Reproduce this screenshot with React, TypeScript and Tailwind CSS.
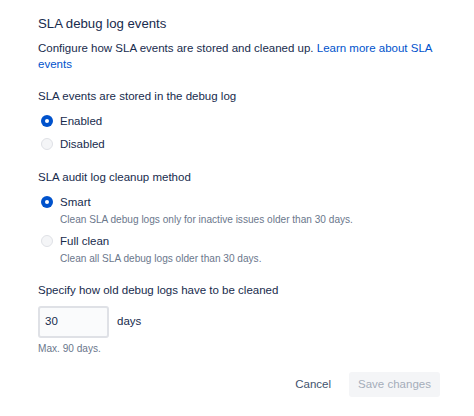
import React from 'react';

const Radio: React.FC<{ checked?: boolean }> = ({ checked }) =>
  checked ? (
    <span className="w-[12px] h-[12px] rounded-full bg-[#0052cc] flex items-center justify-center shrink-0">
      <span className="w-[4px] h-[4px] rounded-full bg-white" />
    </span>
  ) : (
    <span className="w-[12px] h-[12px] rounded-full bg-[#f4f5f7] border border-[#dfe1e6] shrink-0" />
  );

interface OptionProps {
  label:        string;
  description?: string;
  checked?:     boolean;
}

const Option: React.FC<OptionProps> = ({ label, description, checked }) => (
  <div className="flex items-start gap-[7px] pl-[3px]">
    <div className="h-[18px] flex items-center">
      <Radio checked={checked} />
    </div>
    <div>
      <div className="text-[11.5px] leading-[18px] text-[#172b4d]">{label}</div>
      {description && (
        <div className="text-[10.1px] leading-[15px] text-[#6b778c] mt-[1px]">{description}</div>
      )}
    </div>
  </div>
);

export default function App() {
  return (
    <div
      className="w-[474px] h-[416px] bg-white pl-[38px] pr-[34px] pt-[14px]"
      style={{ fontFamily: '"Liberation Sans", Arial, sans-serif' }}
    >
      <h1 className="text-[13.2px] leading-[20px] text-[#172b4d]">SLA debug log events</h1>

      <p className="mt-[6px] text-[11.5px] leading-[16px] text-[#172b4d]">
        Configure how SLA events are stored and cleaned up.{' '}
        <a className="text-[#0052cc]">Learn more about SLA events</a>
      </p>

      <div className="mt-[16px] text-[11.5px] leading-[16px] text-[#172b4d]">
        SLA events are stored in the debug log
      </div>
      <div className="mt-[8px] flex flex-col gap-[5px]">
        <Option label="Enabled" checked />
        <Option label="Disabled" />
      </div>

      <div className="mt-[16px] text-[11.5px] leading-[16px] text-[#172b4d]">
        SLA audit log cleanup method
      </div>
      <div className="mt-[8px] flex flex-col gap-[5px]">
        <Option label="Smart" description="Clean SLA debug logs only for inactive issues older than 30 days." checked />
        <Option label="Full clean" description="Clean all SLA debug logs older than 30 days." />
      </div>

      <div className="mt-[16px] text-[11.5px] leading-[16px] text-[#172b4d]">
        Specify how old debug logs have to be cleaned
      </div>
      <div className="mt-[8px] flex items-center gap-[8px]">
        <div className="w-[71px] h-[32px] rounded-[3px] border-2 border-[#dfe1e6] bg-[#fafbfc] flex items-center px-[5px] text-[11.5px] text-[#172b4d]">
          30
        </div>
        <span className="text-[11.5px] text-[#172b4d]">days</span>
      </div>
      <div className="mt-[3px] text-[10.1px] leading-[15px] text-[#6b778c]">Max. 90 days.</div>

      <div className="mt-[16px] flex justify-end items-center gap-[6px]">
        <button className="h-[25px] px-[12px] text-[11.5px] text-[#42526e] rounded-[3px]">Cancel</button>
        <button className="h-[25px] w-[91px] text-[11.5px] text-[#a5adba] bg-[#f4f5f7] rounded-[3px]">
          Save changes
        </button>
      </div>
    </div>
  );
}
